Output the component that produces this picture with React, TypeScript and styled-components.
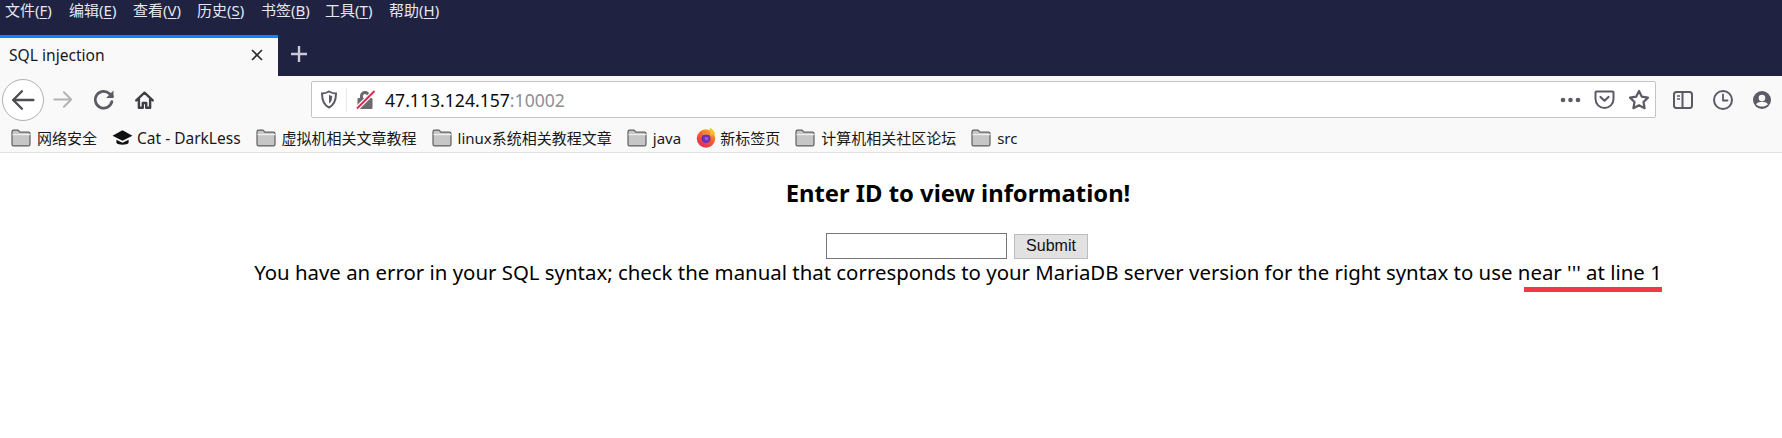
import React from "react";
import styled, { createGlobalStyle } from "styled-components";

const Global = createGlobalStyle`
  html, body { margin: 0; padding: 0; background: #fff; }
  body { font-family: "Noto Sans", "Noto Sans CJK SC", sans-serif; color: #000; }
`;
const UI = `"Noto Sans", "Noto Sans CJK SC", sans-serif`;

const Page = styled.div`width: 1782px; height: 438px; overflow: hidden; display: flex; flex-direction: column;`;
const Chrome = styled.div`background: #1f2241; display: flex; flex-direction: column;`;
const MenuBar = styled.div`height: 35px; padding: 0 0 0 5px; display: flex; align-items: flex-start;`;
const MenuItem = styled.span`
  font: 15px/20px ${UI}; color: #e6e7ee; width: 64px; flex: none;
  u { text-underline-offset: 2px; }
`;
const TabStrip = styled.div`height: 41px; display: flex; align-items: stretch;`;
const Tab = styled.div`
  width: 278px; background: #f9f9fa; border-top: 3px solid #0a84ff; box-sizing: border-box;
  display: flex; align-items: center; justify-content: space-between; padding: 0 15px 4px 9px;
  font: 15.6px ${UI}; color: #18181a;
`;
const NewTab = styled.div`width: 42px; display: flex; align-items: center; justify-content: center; padding-bottom: 4px;`;
const NavBar = styled.div`
  height: 46px; background: #f9f9fa; display: flex; align-items: center; padding: 1px 0 0 2px; box-sizing: border-box;
`;
const BackBtn = styled.div`
  width: 42px; height: 42px; border: 1px solid #b1b1b3; border-radius: 50%; background: #fff;
  box-sizing: border-box; display: flex; align-items: center; justify-content: center; flex: none; margin-right: 9px;
`;
const NavBtn = styled.div<{ $w: number }>`
  width: ${p => p.$w}px; flex: none; display: flex; align-items: center; justify-content: center;
`;
const UrlBar = styled.div`
  margin-left: 157px; width: 1345px; height: 37px; box-sizing: border-box; background: #fff;
  border: 1px solid #c4c4c6; border-radius: 2px; display: flex; align-items: center; flex: none; padding: 0 5px 0 8px;
`;
const Divider = styled.span`width: 1px; height: 24px; background: #e6e6e8; margin: 0 9px 0 8px;`;
const Url = styled.div`font: 17.6px ${UI}; color: #0c0c0d; margin-left: 9px; flex: 1; span { color: #8e8e93; }`;
const UrlActions = styled.div`display: flex; align-items: center; gap: 13px;`;
const RightTools = styled.div`display: flex; align-items: center; margin-left: 17px; gap: 20px;`;
const BookmarkBar = styled.div`
  height: 31px; background: #f9f9fa; border-bottom: 1px solid #e1e1e2; box-sizing: border-box;
  display: flex; align-items: center; padding: 1px 0 0 11px; gap: 15px;
`;
const Bookmark = styled.div<{ $size?: number; $gap?: number }>`
  display: flex; align-items: center; gap: ${p => p.$gap ?? 5}px; font: ${p => p.$size ?? 15}px ${UI}; color: #18181a; white-space: nowrap;
`;
const Content = styled.main`
  padding-left: 134px; flex: 1; display: flex; flex-direction: column; align-items: center;
`;
const Heading = styled.h2`
  margin: 24px 0 0; font: 700 23.8px/32px ${UI}; color: #000;
`;
const Form = styled.form`margin-top: 24px; margin-left: -2px; display: flex; align-items: center; gap: 7px; height: 26px;`;
const Input = styled.input`
  width: 181px; height: 26px; box-sizing: border-box; border: 1px solid #767676; padding: 0; background: #fff;
`;
const Submit = styled.button`
  width: 74px; height: 25px; box-sizing: border-box; border: 1px solid #bcbcbc; background: #e1e1e1; padding: 0;
  font: 16px "Liberation Sans", sans-serif; color: #111;
`;
const ErrorLine = styled.div`
  font: 20.4px/27px ${UI}; color: #000; white-space: nowrap; margin-top: 0;
`;
const Marked = styled.span`
  position: relative;
  &::after {
    content: ""; position: absolute; left: 6px; right: 0; bottom: -6px; height: 5px; background: #ee3a45; 
  }
`;

const S = { fill: "none", stroke: "#5b5b66", strokeWidth: 2, strokeLinecap: "round" as const, strokeLinejoin: "round" as const };

const Folder = () => (
  <svg width="21" height="19" viewBox="0 0 21 18" preserveAspectRatio="none">
    <path d="M1 3.500a1.500 1.500 0 0 1 1.500-1.500h4.500l2 2h8.500a1.500 1.500 0 0 1 1.500 1.500v10a1.500 1.500 0 0 1-1.500 1.500h-15a1.500 1.500 0 0 1-1.500-1.500z" fill="#c6c6c6" stroke="#5f5f5f" strokeWidth="1.200" />
    <path d="M1.600 6.200h17.800" stroke="#efefef" strokeWidth="1.200" />
  </svg>
);
const Cap = () => (
  <svg width="21" height="18" viewBox="0 0 19 16">
    <path d="M9.500 1 18.500 6 9.500 10.500 .5 6z" fill="#111" />
    <path d="M4 9.500v3c1.500 2 9.500 2 11 0v-3l-5.500 2.800z" fill="#111" />
  </svg>
);
const Firefox = () => (
  <svg width="20" height="21" viewBox="0 0 19 20">
    <defs>
      <linearGradient id="ff" x1="0.8" y1="0" x2="0.2" y2="1">
        <stop offset="0" stopColor="#ffb52e" /><stop offset=".45" stopColor="#f5602f" /><stop offset="1" stopColor="#e0245e" />
      </linearGradient>
    </defs>
    <circle cx="9.500" cy="11" r="8.800" fill="url(#ff)" />
    <path d="M13 .5c2.500 1.500 4.500 3.500 5.500 6.500l-4.500 1z" fill="#ffc02e" />
    <circle cx="9.500" cy="11" r="4.300" fill="#6b2fb5" />
    <path d="M6 8c1.500-2 5-2.500 7 0-2-1-5-1-7 0z" fill="#ff9a2e" />
    <circle cx="10" cy="11" r="1.800" fill="#9a5ad0" />
  </svg>
);

const marks = [["文件", "F"], ["编辑", "E"], ["查看", "V"], ["历史", "S"], ["书签", "B"], ["工具", "T"], ["帮助", "H"]];

export default function App() {
  return (
    <Page>
      <Global />
      <Chrome>
        <MenuBar>
          {marks.map(([t, k]) => <MenuItem key={k}>{t}(<u>{k}</u>)</MenuItem>)}
        </MenuBar>
        <TabStrip>
          <Tab>
            SQL injection
            <svg width="12" height="12" viewBox="0 0 12 12"><path d="M1 1l10 10M11 1 1 11" stroke="#2f2f33" strokeWidth="1.700" /></svg>
          </Tab>
          <NewTab>
            <svg width="18" height="18" viewBox="0 0 18 18"><path d="M9 1v16M1 9h16" stroke="#c9cad3" strokeWidth="2.400" /></svg>
          </NewTab>
        </TabStrip>
      </Chrome>
      <NavBar>
        <BackBtn>
          <svg width="24" height="22" viewBox="0 0 22 20"><path d="M20.500 10H2M10 2 2 10l8 8" {...S} stroke="#4c4c52" strokeWidth="2.200" /></svg>
        </BackBtn>
        <NavBtn $w={20}>
          <svg width="23" height="21" viewBox="0 0 22 20"><path d="M1.500 10H20M12 2l8 8-8 8" {...S} stroke="#b3b3b6" strokeWidth="2.200" /></svg>
        </NavBtn>
        <NavBtn $w={62}>
          <svg width="22" height="22" viewBox="0 0 21 21"><path d="M18 12a8 8 0 1 1-2.200-7.500L18.500 7" {...S} strokeWidth="2.600" /><path d="M19.500 1.500v7h-7z" fill="#5b5b66" /></svg>
        </NavBtn>
        <NavBtn $w={19}>
          <svg width="23" height="22" viewBox="0 0 22 21"><path d="M1.500 11 11 2l9.500 9M4.500 9v10.500h4.500v-5.500h4v5.500h4.500V9" {...S} stroke="#3f3f44" strokeWidth="2.800" /></svg>
        </NavBtn>
        <UrlBar>
          <svg width="18" height="19" viewBox="0 0 18 19"><path d="M9 1.500c2.500 1.500 4.500 2 7 2 0 6-1 11-7 14-6-3-7-8-7-14 2.500 0 4.500-.5 7-2z" fill="none" stroke="#5b5b66" strokeWidth="2" /><path d="M9 5c1 .5 2 .8 3.200 .9 0 3.500-.8 6-3.200 7.600z" fill="#5b5b66" /></svg>
          <Divider />
          <svg width="20" height="21" viewBox="0 0 20 21">
            <path d="M4 9V7a5 5 0 0 1 10 0v2h1.500a1 1 0 0 1 1 1v9a1 1 0 0 1-1 1h-13a1 1 0 0 1-1-1v-9a1 1 0 0 1 1-1zM7 9h4V7a2 2 0 0 0-4 0z" fill="#6a6a6f" fillRule="evenodd" />
            <path d="M1 19.500 18.500 2" stroke="#fff" strokeWidth="4.500" />
            <path d="M1 19.500 18.500 2" stroke="#e22850" strokeWidth="2" />
          </svg>
          <Url>47.113.124.157<span>:10002</span></Url>
          <UrlActions>
            <svg width="21" height="6" viewBox="0 0 21 6"><g fill="#5b5b66"><circle cx="3" cy="3" r="2.300" /><circle cx="10.500" cy="3" r="2.300" /><circle cx="18" cy="3" r="2.300" /></g></svg>
            <svg width="21" height="20" viewBox="0 0 21 20"><path d="M2.500 1.500h16a1 1 0 0 1 1 1V9a9 9 0 0 1-18 0V2.500a1 1 0 0 1 1-1z" fill="none" stroke="#5b5b66" strokeWidth="2" /><path d="M6.500 7l4 3.800 4-3.800" {...S} strokeWidth="2.200" /></svg>
            <svg width="22" height="21" viewBox="0 0 22 21"><path d="M11 2l2.800 5.700 6.200.9-4.500 4.400 1.100 6.200L11 16.300 5.400 19.200l1.100-6.200L2 8.600l6.200-.9z" {...S} strokeWidth="2.200" /></svg>
          </UrlActions>
        </UrlBar>
        <RightTools>
          <svg width="20" height="18" viewBox="0 0 20 18"><rect x="1" y="1" width="18" height="16" rx="2.500" {...S} /><path d="M9.500 1v16" {...S} /><path d="M4 5h3M4 8h3" stroke="#5b5b66" strokeWidth="1.400" /></svg>
          <svg width="20" height="20" viewBox="0 0 20 20"><circle cx="10" cy="10" r="9" {...S} /><path d="M10 4.500V10.500h4.500" {...S} strokeWidth="1.800" /></svg>
          <svg width="18" height="18" viewBox="0 0 18 18"><circle cx="9" cy="9" r="9" fill="#5b5b66" /><circle cx="9" cy="7" r="3.300" fill="#f9f9fa" /><path d="M3 13.200c3-3.200 9-3.200 12 0-3 3.200-9 3.200-12 0z" fill="#f9f9fa" /></svg>
        </RightTools>
      </NavBar>
      <BookmarkBar>
        <Bookmark><Folder />网络安全</Bookmark>
        <Bookmark $size={15.5} $gap={4}><Cap />Cat - DarkLess</Bookmark>
        <Bookmark><Folder />虚拟机相关文章教程</Bookmark>
        <Bookmark><Folder />linux系统相关教程文章</Bookmark>
        <Bookmark><Folder />java</Bookmark>
        <Bookmark $gap={4}><Firefox />新标签页</Bookmark>
        <Bookmark><Folder />计算机相关社区论坛</Bookmark>
        <Bookmark><Folder />src</Bookmark>
      </BookmarkBar>
      <Content>
        <Heading>Enter ID to view information!</Heading>
        <Form onSubmit={e => e.preventDefault()}>
          <Input type="text" />
          <Submit type="submit">Submit</Submit>
        </Form>
        <ErrorLine>
          You have an error in your SQL syntax; check the manual that corresponds to your MariaDB server version for the right syntax to use <Marked>near ''' at line 1</Marked>
        </ErrorLine>
      </Content>
    </Page>
  );
}
